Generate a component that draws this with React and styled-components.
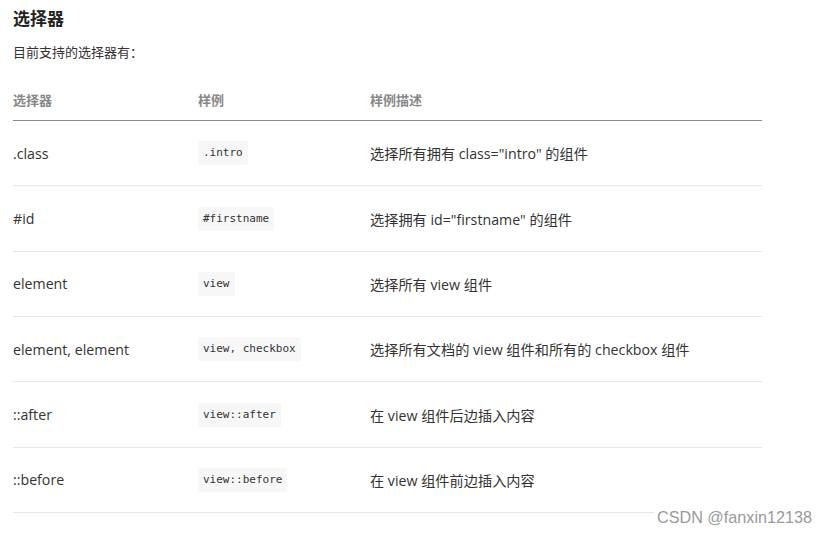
import React from "react";
import styled, { createGlobalStyle } from "styled-components";

const Global = createGlobalStyle`
  html, body { margin: 0; padding: 0; background: #fff; }
  body {
    font-family: "Open Sans", "Noto Sans CJK SC", sans-serif;
    color: #333;
    width: 828px;
    height: 533px;
    overflow: hidden;
  }
`;

const Page = styled.div`
  position: relative;
  width: 828px;
  height: 533px;
  padding: 0 66px 0 13px;
  box-sizing: border-box;
`;

const Title = styled.h3`
  margin: 0;
  padding-top: 6px;
  height: 26px;
  line-height: 24px;
  font-size: 17px;
  font-weight: 700;
  color: #222;
  font-family: "Noto Sans CJK SC", sans-serif;
`;

const Intro = styled.p`
  margin: 10px 0 0;
  font-size: 13px;
  line-height: 20px;
  color: #333;
  font-family: "Noto Sans CJK SC", sans-serif;
`;

const Table = styled.div`
  margin-top: 17px;
  width: 749px;
  display: grid;
  grid-template-columns: 185px 172px 1fr;
`;

const HeadCell = styled.div`
  height: 41px;
  display: flex;
  align-items: center;
  border-bottom: 1px solid #8c8c8c;
  font-size: 13px;
  font-weight: 700;
  color: #888;
  font-family: "Noto Sans CJK SC", sans-serif;
`;

const Cell = styled.div`
  height: 64.35px;
  display: flex;
  align-items: center;
  border-bottom: 1px solid #e6e6e6;
  font-size: 14.2px;
  color: #333;
`;

const Code = styled.code`
  display: inline-block;
  background: #f7f7f7;
  border-radius: 2px;
  padding: 0 5px;
  height: 24px;
  line-height: 24px;
  font-family: "DejaVu Sans Mono", monospace;
  font-size: 11px;
  color: #333;
`;

const Watermark = styled.div`
  position: absolute;
  left: 654px;
  top: 506px;
  padding: 0 3px;
  background: #fff;
  font-family: "Liberation Sans", sans-serif;
  font-size: 16.2px;
  line-height: 22px;
  color: #9a9a9a;
`;

const rows = [
  [".class", ".intro", "选择所有拥有 class=\"intro\" 的组件"],
  ["#id", "#firstname", "选择拥有 id=\"firstname\" 的组件"],
  ["element", "view", "选择所有 view 组件"],
  ["element, element", "view, checkbox", "选择所有文档的 view 组件和所有的 checkbox 组件"],
  ["::after", "view::after", "在 view 组件后边插入内容"],
  ["::before", "view::before", "在 view 组件前边插入内容"],
];

export default function App() {
  return (
    <>
      <Global />
      <Page>
        <Title>选择器</Title>
        <Intro>目前支持的选择器有：</Intro>
        <Table>
          <HeadCell>选择器</HeadCell>
          <HeadCell>样例</HeadCell>
          <HeadCell>样例描述</HeadCell>
          {rows.map(([a, b, c]) => (
            <React.Fragment key={a}>
              <Cell>{a}</Cell>
              <Cell>
                <Code>{b}</Code>
              </Cell>
              <Cell>{c}</Cell>
            </React.Fragment>
          ))}
        </Table>
        <Watermark>CSDN @fanxin12138</Watermark>
      </Page>
    </>
  );
}
